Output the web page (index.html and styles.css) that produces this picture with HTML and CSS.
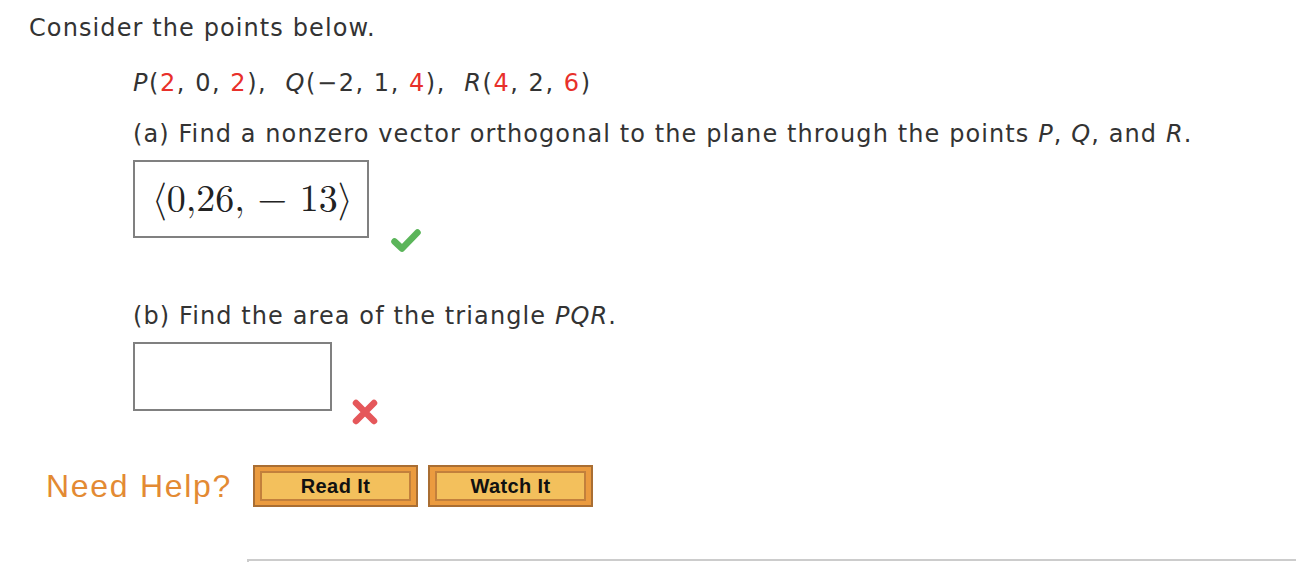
FILE: index.html
```html
<!DOCTYPE html>
<html>
<head>
<meta charset="utf-8">
<link rel="stylesheet" href="styles.css">
</head>
<body>
<div class="page">
  <p class="intro">Consider the points below.</p>
  <div class="indent">
    <p class="points"><i>P</i>(<span class="red">2</span>, 0, <span class="red">2</span>),&nbsp; <i>Q</i>(−2, 1, <span class="red">4</span>),&nbsp; <i>R</i>(<span class="red">4</span>, 2, <span class="red">6</span>)</p>
    <p class="part">(a) Find a nonzero vector orthogonal to the plane through the points <i>P</i>, <i>Q</i>, and <i>R</i>.</p>
    <div class="answer">
      <div class="box box-a"><span class="math">⟨0,26, − 13⟩</span></div>
      <svg class="icon check" width="30" height="25" viewBox="0 0 30 25">
        <path d="M3.5 13.5 L11 20.5 L26.5 4.5" fill="none" stroke="#5bb55a" stroke-width="6.5" stroke-linecap="round" stroke-linejoin="round"/>
      </svg>
    </div>
    <p class="part part-b">(b) Find the area of the triangle <i>PQR</i>.</p>
    <div class="answer">
      <div class="box box-b"></div>
      <svg class="icon cross" width="28" height="26" viewBox="0 0 28 26">
        <path d="M5 4 L23 22 M23 4 L5 22" fill="none" stroke="#e5575a" stroke-width="6.5" stroke-linecap="round"/>
      </svg>
    </div>
  </div>
  <div class="help">
    <span class="need">Need Help?</span>
    <span class="btn"><span class="btn-in">Read It</span></span>
    <span class="btn"><span class="btn-in">Watch It</span></span>
  </div>
  <div class="footer-box"></div>
</div>
</body>
</html>
```
FILE: styles.css
```css
html, body {
  margin: 0;
  padding: 0;
  background: #fff;
  overflow: hidden;
}
.page {
  font-family: "DejaVu Sans", Verdana, sans-serif;
  font-size: 24px;
  letter-spacing: 1.1px;
  color: #333;
  padding: 12px 0 0 29px;
  height: 562px;
  box-sizing: border-box;
  overflow: hidden;
}
p {
  margin: 0;
  line-height: 32px;
}
.intro {
  margin-bottom: 23px;
}
.indent {
  margin-left: 104px;
}
.points {
  margin-bottom: 19px;
  letter-spacing: 1.55px;
}
.red {
  color: #e8302a;
}
.answer {
  display: flex;
  align-items: flex-end;
  margin-top: 10px;
}
.box {
  border: 2px solid #808080;
  box-sizing: border-box;
  background: #fff;
}
.box-a {
  width: 236px;
  height: 78px;
  display: flex;
  align-items: center;
  padding-left: 17px;
}
.math {
  font-family: "Latin Modern Math", "Liberation Serif", "DejaVu Serif", serif;
  font-size: 38px;
  letter-spacing: 0;
  color: #222;
  white-space: pre;
}
.box-b {
  width: 199px;
  height: 69px;
}
.icon {
  display: block;
}
.check {
  margin-left: 22px;
  margin-bottom: -15px;
}
.cross {
  margin-left: 19px;
  margin-bottom: -14px;
}
.part-b {
  margin-top: 62px;
}
.help {
  display: flex;
  align-items: center;
  margin-top: 54px;
  margin-left: 17px;
}
.need {
  font-family: "Liberation Sans", Arial, sans-serif;
  font-size: 32px;
  color: #e38a33;
  letter-spacing: 1.7px;
  margin-right: 21px;
}
.btn {
  width: 165px;
  height: 42px;
  box-sizing: border-box;
  border: 2px solid #a96e33;
  background: #eb9b3f;
  padding: 4px 5px;
  margin-right: 10px;
  display: flex;
}
.btn-in {
  flex: 1;
  border: 2px solid #c2803c;
  background: #f3c05c;
  display: flex;
  align-items: center;
  justify-content: center;
  font-family: "Liberation Sans", Arial, sans-serif;
  font-weight: bold;
  font-size: 20px;
  letter-spacing: 0.4px;
  color: #111;
}
.footer-box {
  margin-top: 52px;
  margin-left: 218px;
  height: 2px;
  border-top: 2px solid #cccccc;
  border-left: 2px solid #cccccc;
}
```
